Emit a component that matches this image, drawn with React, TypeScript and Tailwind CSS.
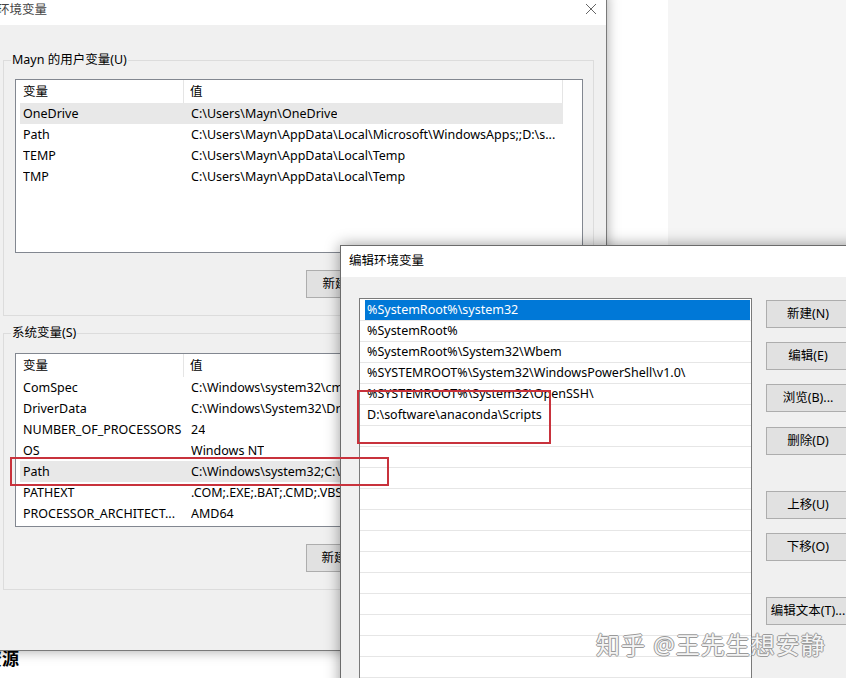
const ui = "font-['Noto_Sans','Noto_Sans_CJK_SC',sans-serif]";

type Row = [string, string];

const userVars: Row[] = [
  ['OneDrive', 'C:\\Users\\Mayn\\OneDrive'],
  ['Path', 'C:\\Users\\Mayn\\AppData\\Local\\Microsoft\\WindowsApps;;D:\\s...'],
  ['TEMP', 'C:\\Users\\Mayn\\AppData\\Local\\Temp'],
  ['TMP', 'C:\\Users\\Mayn\\AppData\\Local\\Temp'],
];

const sysVars: Row[] = [
  ['ComSpec', 'C:\\Windows\\system32\\cmd.exe'],
  ['DriverData', 'C:\\Windows\\System32\\Drivers\\DriverData'],
  ['NUMBER_OF_PROCESSORS', '24'],
  ['OS', 'Windows NT'],
  ['Path', 'C:\\Windows\\system32;C:\\Windows;C:\\Windows\\System32\\Wbem;...'],
  ['PATHEXT', '.COM;.EXE;.BAT;.CMD;.VBS;.VBE;.JS;.JSE;.WSF;.WSH;.MSC'],
  ['PROCESSOR_ARCHITECT...', 'AMD64'],
];

const pathItems = [
  '%SystemRoot%\\system32',
  '%SystemRoot%',
  '%SystemRoot%\\System32\\Wbem',
  '%SYSTEMROOT%\\System32\\WindowsPowerShell\\v1.0\\',
  '%SYSTEMROOT%\\System32\\OpenSSH\\',
  'D:\\software\\anaconda\\Scripts',
];

function WinButton({ label, className = '' }: { label: string; className?: string }) {
  return (
    <div
      className={`flex h-[28px] shrink-0 items-center justify-center whitespace-nowrap border border-[#adadad] bg-[#e1e1e1] text-[12.5px] text-black ${className}`}
    >
      {label}
    </div>
  );
}

function VarList({ rows, highlight }: { rows: Row[]; highlight: number }) {
  return (
    <div className="h-[174px] w-[568px] overflow-hidden border border-[#828790] bg-white text-[12.5px] text-black">
      {/* header */}
      <div className="flex h-[23px] items-center">
        <div className="h-full w-[168px] border-r border-[#e5e5e5] pl-[7px] leading-[23px]">变量</div>
        <div className="h-full w-[379px] border-r border-[#e5e5e5] pl-[6px] leading-[23px]">值</div>
      </div>
      {rows.map(([name, value], i) => (
        <div
          key={i}
          className={`ml-[4px] flex h-[21px] w-[543px] items-center pl-[3px] leading-[21px] ${
            i === highlight ? 'bg-[#e8e8e8]' : ''
          }`}
        >
          <div className="w-[168px] shrink-0 overflow-hidden whitespace-nowrap">{name}</div>
          <div className="overflow-hidden whitespace-nowrap">{value}</div>
        </div>
      ))}
    </div>
  );
}

function GroupBox({
  title,
  rows,
  highlight,
  buttons,
  className = '',
}: {
  title: string;
  rows: Row[];
  highlight: number;
  buttons: string[];
  className?: string;
}) {
  return (
    <fieldset className={`w-[591px] border border-[#dcdcdc] pb-[17px] pl-[11px] pr-[10px] ${className}`}>
      <legend className="-ml-[4px] px-[1px] text-[12.5px] leading-[16px] text-black">{title}</legend>
      <VarList rows={rows} highlight={highlight} />
      <div className="mt-[17px] flex justify-end gap-[11px]">
        {buttons.map((b) => (
          <WinButton key={b} label={b} className="w-[85px]" />
        ))}
      </div>
    </fieldset>
  );
}

function EnvDialog() {
  return (
    <div className="absolute left-[-9px] top-[-7px] flex h-[658px] w-[616px] flex-col border border-[#7a7a7a] bg-[#f0f0f0] shadow-[0_0_12px_rgba(0,0,0,0.35)]">
      <div className="flex h-[31px] shrink-0 items-center justify-between bg-white pl-[5px] pr-[9px]">
        <span className="pt-[1px] text-[12.5px] text-[#444]">环境变量</span>
        <svg width="12" height="12" viewBox="0 0 12 12" className="mb-[1px]">
          <path d="M1 1 L11 11 M11 1 L1 11" stroke="#666" strokeWidth="1" fill="none" />
        </svg>
      </div>
      <div className="flex flex-col pl-[11px] pt-[27px]">
        <GroupBox
          title="Mayn 的用户变量(U)"
          rows={userVars}
          highlight={0}
          buttons={['新建(N)...', '编辑(E)...', '删除(D)']}
          className="pt-[11px]"
        />
        <GroupBox
          title="系统变量(S)"
          rows={sysVars}
          highlight={4}
          buttons={['新建(W)...', '编辑(I)...', '删除(L)']}
          className="mt-[9px] pt-[12px]"
        />
      </div>
    </div>
  );
}

function EditPathDialog() {
  const rows = [...pathItems, ...Array(14).fill('')];
  return (
    <div className="absolute left-[340px] top-[245px] flex h-[460px] w-[530px] flex-col border border-[#6b6b6b] bg-[#f0f0f0] shadow-[0_0_14px_rgba(0,0,0,0.4)]">
      <div className="flex h-[31px] shrink-0 items-center bg-white pl-[8px] text-[12.5px] text-black">
        编辑环境变量
      </div>
      <div className="flex pl-[18px] pt-[21px]">
        <div className="h-[420px] w-[393px] shrink-0 overflow-hidden border border-[#7a7a7a] bg-white pt-[1px] text-[12.5px]">
          {rows.map((item, i) => (
            <div key={i} className="h-[21px] border-b border-[#e6e6e6]">
              <div
                className={`ml-[5px] mr-[1px] h-[20px] overflow-hidden whitespace-nowrap pl-[2px] leading-[20px] ${
                  i === 0 ? 'bg-[#0078d7] text-white' : 'text-black'
                }`}
              >
                {item}
              </div>
            </div>
          ))}
        </div>
        <div className="ml-[14px] mt-[2px] flex flex-col">
          <WinButton label="新建(N)" className="w-[84px]" />
          <WinButton label="编辑(E)" className="mt-[14px] w-[84px]" />
          <WinButton label="浏览(B)..." className="mt-[14px] w-[84px]" />
          <WinButton label="删除(D)" className="mt-[15px] w-[84px]" />
          <WinButton label="上移(U)" className="mt-[36px] w-[84px]" />
          <WinButton label="下移(O)" className="mt-[14px] w-[84px]" />
          <WinButton label="编辑文本(T)..." className="mt-[36px] w-[84px]" />
        </div>
      </div>
    </div>
  );
}

export default function App() {
  return (
    <div className={`relative flex h-[678px] w-[846px] overflow-hidden bg-white ${ui}`}>
      {/* page behind the dialogs */}
      <div className="flex w-[668px] flex-col justify-end pb-[8px]">
        <span className="-ml-[15px] text-[17px] font-bold leading-[22px] text-black">资源</span>
      </div>
      <div className="flex-1 bg-[#f5f5f5]" />

      <EnvDialog />
      <EditPathDialog />

      {/* annotations */}
      <div className="absolute left-[10px] top-[457px] h-[29px] w-[379px] border-2 border-[#c8323c]" />
      <div className="absolute left-[357px] top-[390px] h-[54px] w-[194px] border-2 border-[#c8323c]" />

      <div className="absolute left-[596px] top-[627px] whitespace-nowrap text-[24px] tracking-[1px] text-[#f4f4f4] [text-shadow:1px_0_#9a9a9a,-1px_0_#9a9a9a,0_1px_#9a9a9a,0_-1px_#9a9a9a]">
        知乎 @王先生想安静
      </div>
    </div>
  );
}
